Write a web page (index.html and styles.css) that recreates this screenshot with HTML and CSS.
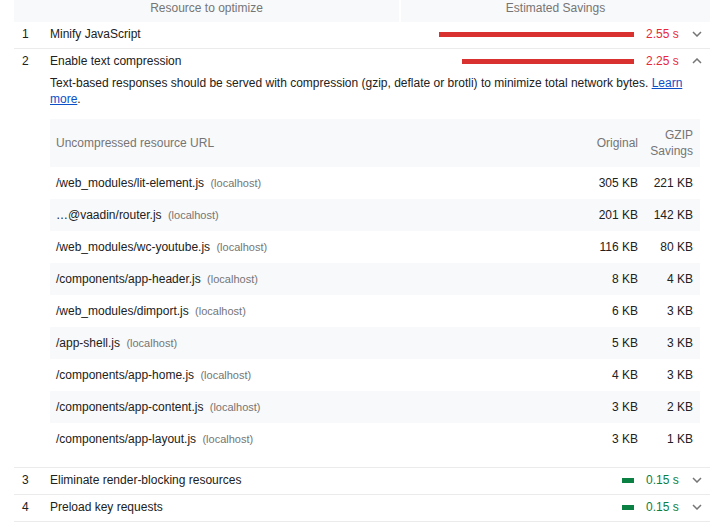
FILE: index.html
```html
<!DOCTYPE html>
<html>
<head>
    <meta charset="UTF-8" />
    <title>Opportunities</title>
    <link rel="stylesheet" href="styles.css">
</head>
<body>
    <div class="audits">
        <div class="audits-head">
            <div class="head-cell head-resource">Resource to optimize</div>
            <div class="head-cell head-savings">Estimated Savings</div>
        </div>

        <div class="audit">
            <div class="audit-row">
                <span class="audit-index">1</span>
                <span class="audit-title">Minify JavaScript</span>
                <span class="bar bar-fail" style="width: 195px;"></span>
                <span class="audit-value fail">2.55 s</span>
                <span class="chevron">
                    <svg width="10" height="6" viewBox="0 0 10 6"><polyline points="1,1 5,5 9,1" /></svg>
                </span>
            </div>
        </div>

        <div class="audit">
            <div class="audit-row">
                <span class="audit-index">2</span>
                <span class="audit-title">Enable text compression</span>
                <span class="bar bar-fail" style="width: 172px;"></span>
                <span class="audit-value fail">2.25 s</span>
                <span class="chevron">
                    <svg width="10" height="6" viewBox="0 0 10 6"><polyline points="1,5 5,1 9,5" /></svg>
                </span>
            </div>
            <div class="audit-body">
                <p class="audit-desc">Text-based responses should be served with compression (gzip, deflate or brotli) to minimize total network bytes. <a href="#">Learn more</a>.</p>

                <div class="details">
                    <div class="details-head">
                        <div class="col-url">Uncompressed resource URL</div>
                        <div class="col-num">Original</div>
                        <div class="col-num col-last">GZIP Savings</div>
                    </div>
                    <div class="details-row">
                        <div class="col-url">/web_modules/lit-element.js <span class="host">(localhost)</span></div>
                        <div class="col-num">305 KB</div>
                        <div class="col-num col-last">221 KB</div>
                    </div>
                    <div class="details-row">
                        <div class="col-url">…@vaadin/router.js <span class="host">(localhost)</span></div>
                        <div class="col-num">201 KB</div>
                        <div class="col-num col-last">142 KB</div>
                    </div>
                    <div class="details-row">
                        <div class="col-url">/web_modules/wc-youtube.js <span class="host">(localhost)</span></div>
                        <div class="col-num">116 KB</div>
                        <div class="col-num col-last">80 KB</div>
                    </div>
                    <div class="details-row">
                        <div class="col-url">/components/app-header.js <span class="host">(localhost)</span></div>
                        <div class="col-num">8 KB</div>
                        <div class="col-num col-last">4 KB</div>
                    </div>
                    <div class="details-row">
                        <div class="col-url">/web_modules/dimport.js <span class="host">(localhost)</span></div>
                        <div class="col-num">6 KB</div>
                        <div class="col-num col-last">3 KB</div>
                    </div>
                    <div class="details-row">
                        <div class="col-url">/app-shell.js <span class="host">(localhost)</span></div>
                        <div class="col-num">5 KB</div>
                        <div class="col-num col-last">3 KB</div>
                    </div>
                    <div class="details-row">
                        <div class="col-url">/components/app-home.js <span class="host">(localhost)</span></div>
                        <div class="col-num">4 KB</div>
                        <div class="col-num col-last">3 KB</div>
                    </div>
                    <div class="details-row">
                        <div class="col-url">/components/app-content.js <span class="host">(localhost)</span></div>
                        <div class="col-num">3 KB</div>
                        <div class="col-num col-last">2 KB</div>
                    </div>
                    <div class="details-row">
                        <div class="col-url">/components/app-layout.js <span class="host">(localhost)</span></div>
                        <div class="col-num">3 KB</div>
                        <div class="col-num col-last">1 KB</div>
                    </div>
                </div>
            </div>
        </div>

        <div class="audit">
            <div class="audit-row">
                <span class="audit-index">3</span>
                <span class="audit-title">Eliminate render-blocking resources</span>
                <span class="bar bar-pass" style="width: 12px;"></span>
                <span class="audit-value pass">0.15 s</span>
                <span class="chevron">
                    <svg width="10" height="6" viewBox="0 0 10 6"><polyline points="1,1 5,5 9,1" /></svg>
                </span>
            </div>
        </div>

        <div class="audit">
            <div class="audit-row">
                <span class="audit-index">4</span>
                <span class="audit-title">Preload key requests</span>
                <span class="bar bar-pass" style="width: 12px;"></span>
                <span class="audit-value pass">0.15 s</span>
                <span class="chevron">
                    <svg width="10" height="6" viewBox="0 0 10 6"><polyline points="1,1 5,5 9,1" /></svg>
                </span>
            </div>
        </div>
    </div>
</body>
</html>
```

FILE: styles.css
```css
* {
    margin: 0;
    padding: 0;
    box-sizing: border-box;
}

body {
    font-family: "Liberation Sans", Arial, sans-serif;
    font-size: 12px;
    color: #212121;
    background: #fff;
}

.audits {
    width: 696px;
    margin-left: 14px;
}

.audits-head {
    display: flex;
    gap: 2px;
    height: 22px;
}

.head-cell {
    background: #f8f9fa;
    color: #757575;
    display: flex;
    align-items: center;
    justify-content: center;
    padding-bottom: 6px;
}

.head-resource {
    width: 385px;
}

.head-savings {
    flex: 1;
}

.audit {
    border-bottom: 1px solid #ebebeb;
}

.audit-row {
    display: flex;
    align-items: center;
    height: 26px;
    padding-bottom: 2px;
}

.audit-index {
    width: 36px;
    padding-left: 8px;
}

.audit-title {
    flex: 1;
}

.bar {
    height: 5px;
}

.bar-fail {
    background: #d93030;
}

.bar-pass {
    background: #0b8043;
}

.audit-value {
    width: 52px;
    padding-left: 12px;
}

.fail {
    color: #e8283c;
}

.pass {
    color: #0b8043;
}

.chevron {
    width: 22px;
    margin-right: 2px;
    display: flex;
    justify-content: center;
}

.chevron polyline {
    fill: none;
    stroke: #757575;
    stroke-width: 1.5;
}

.audit-body {
    padding: 0 10px 12px 36px;
}

.audit-desc {
    line-height: 16px;
}

.audit-desc a {
    color: #0c50c7;
}

.details {
    margin-top: 12px;
    width: 650px;
}

.details-head,
.details-row {
    display: flex;
    align-items: center;
}

.details-head {
    height: 48px;
    background: #f8f9fa;
    color: #757575;
}

.details-row {
    height: 32px;
}

.details-row:nth-child(odd) {
    background: #f8f9fa;
}

.col-url {
    flex: 1;
    padding-left: 6px;
}

.col-num {
    width: 62px;
    text-align: right;
    padding-right: 7px;
}

.col-last {
    width: 55px;
    line-height: 16px;
}

.host {
    color: #757575;
    font-size: 11px;
    margin-left: 3px;
}
```
